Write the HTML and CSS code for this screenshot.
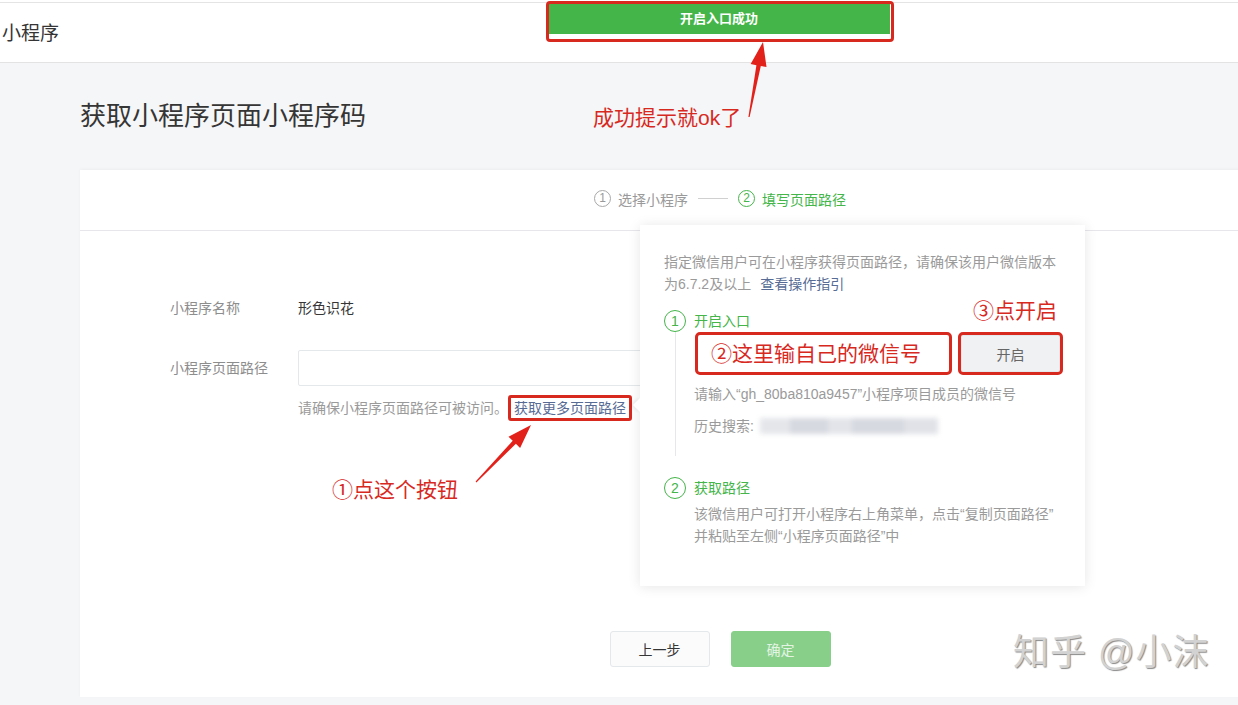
FILE: index.html
```html
<!DOCTYPE html>
<html lang="zh-CN">
<head>
    <meta charset="UTF-8">
    <meta name="viewport" content="width=device-width, initial-scale=1.0">
    <title>获取小程序页面小程序码</title>
    <link rel="stylesheet" href="styles.css">
</head>
<body>
    <div class="topbar">
        <span class="brand">小程序</span>
    </div>

    <div class="main">
        <h2 class="page-title">获取小程序页面小程序码</h2>

        <div class="card">
            <div class="steps">
                <span class="step"><i class="num">1</i>选择小程序</span>
                <span class="step-line"></span>
                <span class="step current"><i class="num">2</i>填写页面路径</span>
            </div>

            <div class="form">
                <div class="row">
                    <label class="label">小程序名称</label>
                    <div class="value">形色识花</div>
                </div>
                <div class="row">
                    <label class="label" for="path">小程序页面路径</label>
                    <div class="field">
                        <input type="text" id="path" class="path-input">
                        <p class="tips">请确保小程序页面路径可被访问。<a href="#" class="link mark-link">获取更多页面路径</a></p>
                    </div>
                </div>
                <div class="actions">
                    <button class="btn">上一步</button>
                    <button class="btn btn-primary" disabled>确定</button>
                </div>
            </div>

            <!-- 获取更多页面路径 弹出层 -->
            <div class="popover">
                <p class="pop-intro">指定微信用户可在小程序获得页面路径，请确保该用户微信版本<br>为6.7.2及以上<a href="#" class="link guide">查看操作指引</a></p>

                <div class="pop-step">
                    <div class="pop-step-head"><i class="pop-num">1</i>开启入口</div>
                    <div class="pop-step-body with-line">
                        <div class="open-row">
                            <div class="wx-input mark"><span class="note">②这里输自己的微信号</span></div>
                            <button class="btn-open mark">开启</button>
                        </div>
                        <p class="pop-text hint">请输入“gh_80ba810a9457”小程序项目成员的微信号</p>
                        <p class="pop-text history">历史搜索:
                            <span class="blurred">
                                <span class="b1"></span><span class="b2"></span><span class="b3"></span><span class="b4"></span><span class="b5"></span>
                            </span>
                        </p>
                    </div>
                </div>

                <div class="pop-step second">
                    <div class="pop-step-head"><i class="pop-num">2</i>获取路径</div>
                    <div class="pop-step-body">
                        <p class="pop-text">该微信用户可打开小程序右上角菜单，点击“复制页面路径”<br>并粘贴至左侧“小程序页面路径”中</p>
                    </div>
                </div>

                <span class="note note-open">③点开启</span>
            </div>
        </div>
    </div>

    <!-- 顶部提示 -->
    <div class="toast">开启入口成功</div>
    <div class="toast-box"></div>

    <span class="note note-toast">成功提示就ok了</span>
    <span class="note note-link">①点这个按钮</span>

    <svg class="arrows" width="1238" height="705" viewBox="0 0 1238 705">
        <polygon fill="#e3211b" points="748.4,116.9 756.4,65.2 750.7,64.1 763,42 766.5,67.1 760.8,66 749.6,117.1"/>
        <polygon fill="#e3211b" points="475.6,481.6 512.7,440.8 508.5,436.8 531,425 520.1,447.9 515.9,443.8 476.4,482.4"/>
    </svg>

    <div class="watermark">知乎 @小沫</div>
</body>
</html>
```

FILE: styles.css
```css
html, body {
    margin: 0;
    padding: 0;
}
body {
    position: relative;
    min-height: 705px;
    overflow: hidden;
    background: #f5f6f7;
    color: #353535;
    font-family: "Liberation Sans", "Noto Sans CJK SC", sans-serif;
    font-size: 14px;
}
p {
    margin: 0;
}
a {
    text-decoration: none;
}

/* barra do topo */
.topbar {
    height: 62px;
    background: linear-gradient(#fff 2px, #e4e4e4 2px, #e4e4e4 3px, #fff 3px);
    border-bottom: 1px solid #e3e3e3;
    display: flex;
    align-items: center;
    padding-left: 2px;
}
.brand {
    font-size: 19px;
    color: #353535;
}

.main {
    padding: 35px 0 0 80px;
}
.page-title {
    margin: 0 0 36px;
    font-size: 26px;
    font-weight: normal;
    line-height: 36px;
    color: #353535;
}

.card {
    position: relative;
    width: 1280px;
    background: #fff;
    box-shadow: 0 -1px 3px rgba(0, 0, 0, 0.04);
}

/* passos */
.steps {
    height: 57px;
    padding-bottom: 3px;
    border-bottom: 1px solid #e7e7eb;
    display: flex;
    justify-content: center;
    align-items: center;
    gap: 10px;
    color: #9a9a9a;
}
.step {
    display: flex;
    align-items: center;
    gap: 7px;
}
.num {
    font-style: normal;
    width: 15px;
    height: 15px;
    border: 1px solid #a8a8a8;
    border-radius: 50%;
    font-size: 12px;
    line-height: 15px;
    text-align: center;
}
.step.current {
    color: #44b549;
}
.step.current .num {
    border-color: #44b549;
}
.step-line {
    width: 30px;
    height: 1px;
    background: #d0d0d0;
}

/* formulario */
.form {
    padding: 59px 0 30px 90px;
}
.row {
    display: flex;
    align-items: flex-start;
    margin-bottom: 24px;
}
.label {
    width: 128px;
    line-height: 36px;
    color: #8d8d8d;
}
.value {
    line-height: 36px;
    color: #353535;
}
.path-input {
    width: 400px;
    height: 36px;
    box-sizing: border-box;
    border: 1px solid #e4e8eb;
    border-radius: 2px;
    outline: none;
}
.tips {
    margin-top: 11px;
    line-height: 22px;
    color: #9a9a9a;
}
.link {
    color: #576b95;
}
.mark-link {
    padding: 2px 3px;
    border: 3px solid #d8291f;
    border-radius: 3px;
}
.actions {
    margin: 212px 0 0 -90px;
    display: flex;
    justify-content: center;
    gap: 21px;
}
.btn {
    width: 100px;
    height: 36px;
    border: 1px solid #e4e8eb;
    border-radius: 3px;
    background: #fbfbfb;
    color: #353535;
    font-family: inherit;
    font-size: 14px;
}
.btn-primary {
    border-color: #88d08a;
    background: #88d08a;
    color: #e4f4e4;
}

/* popover */
.popover {
    position: absolute;
    left: 560px;
    top: 55px;
    width: 397px;
    padding: 26px 24px 39px;
    background: #fff;
    box-shadow: 0 1px 12px rgba(0, 0, 0, 0.1);
}
.popover::before {
    content: "";
    position: absolute;
    left: -5px;
    top: 175px;
    width: 10px;
    height: 10px;
    background: #fff;
    transform: rotate(45deg);
    box-shadow: -2px 2px 3px rgba(0, 0, 0, 0.06);
}
.pop-intro {
    line-height: 22px;
    color: #9a9a9a;
    white-space: nowrap;
}
.guide {
    margin-left: 9px;
}
.pop-step {
    margin-top: 15px;
}
.pop-step.second {
    margin-top: 21px;
}
.pop-step-head {
    display: flex;
    align-items: center;
    gap: 8px;
    color: #44b549;
    line-height: 22px;
}
.pop-num {
    font-style: normal;
    width: 20px;
    height: 20px;
    border: 1px solid #44b549;
    border-radius: 50%;
    line-height: 20px;
    text-align: center;
    font-size: 14px;
}
.pop-step-body {
    padding-left: 30px;
    padding-top: 4px;
}
.pop-step-body.with-line {
    margin-left: 11px;
    padding: 3px 0 19px 18px;
    border-left: 1px solid #e7e7eb;
}
.open-row {
    display: flex;
    gap: 12px;
    margin-left: 4px;
}
.wx-input {
    width: 251px;
    height: 37px;
    box-sizing: border-box;
    padding-left: 13px;
    display: flex;
    align-items: center;
    background: #fff;
}
.mark {
    outline: 3px solid #d8291f;
    border-radius: 2px;
}
.btn-open {
    width: 99px;
    height: 37px;
    border: 1px solid #e4e8eb;
    background: #f0f1f2;
    color: #666;
    font-family: inherit;
    font-size: 14px;
}
.pop-text {
    line-height: 22px;
    color: #9a9a9a;
    white-space: nowrap;
}
.hint {
    margin-top: 11px;
}
.history {
    margin-top: 10px;
    display: flex;
    align-items: center;
}
.blurred {
    display: flex;
    align-items: center;
    height: 22px;
    margin-left: 6px;
    filter: blur(2.5px);
}
.blurred span {
    height: 16px;
    background: #d6d9e0;
}
.blurred .b1 { width: 30px; background: #e4e6ea; }
.blurred .b2 { width: 38px; }
.blurred .b3 { width: 24px; background: #e2e4e9; }
.blurred .b4 { width: 52px; }
.blurred .b5 { width: 34px; background: #e0e2e7; }

/* anotacoes em vermelho */
.note {
    color: #d8291f;
    font-size: 21px;
    line-height: 24px;
    white-space: nowrap;
}
.note-open {
    position: absolute;
    left: 333px;
    top: 74px;
}
.note-toast {
    position: absolute;
    left: 593px;
    top: 106px;
}
.note-link {
    position: absolute;
    left: 332px;
    top: 478px;
}

.toast {
    position: absolute;
    left: 548px;
    top: 4px;
    width: 342px;
    height: 30px;
    line-height: 30px;
    background: #44b549;
    color: #fff;
    font-size: 13px;
    font-weight: bold;
    text-align: center;
}
.toast-box {
    position: absolute;
    left: 546px;
    top: 1px;
    width: 342px;
    height: 35px;
    border: 3px solid #d8291f;
    border-radius: 4px;
}

.arrows {
    position: absolute;
    left: 0;
    top: 0;
    pointer-events: none;
}

.watermark {
    position: absolute;
    left: 1013px;
    top: 630px;
    font-size: 36px;
    line-height: 46px;
    color: #d2d2d2;
    text-shadow: 1px 1px 1px #8a8a8a;
    letter-spacing: 1px;
}
```
